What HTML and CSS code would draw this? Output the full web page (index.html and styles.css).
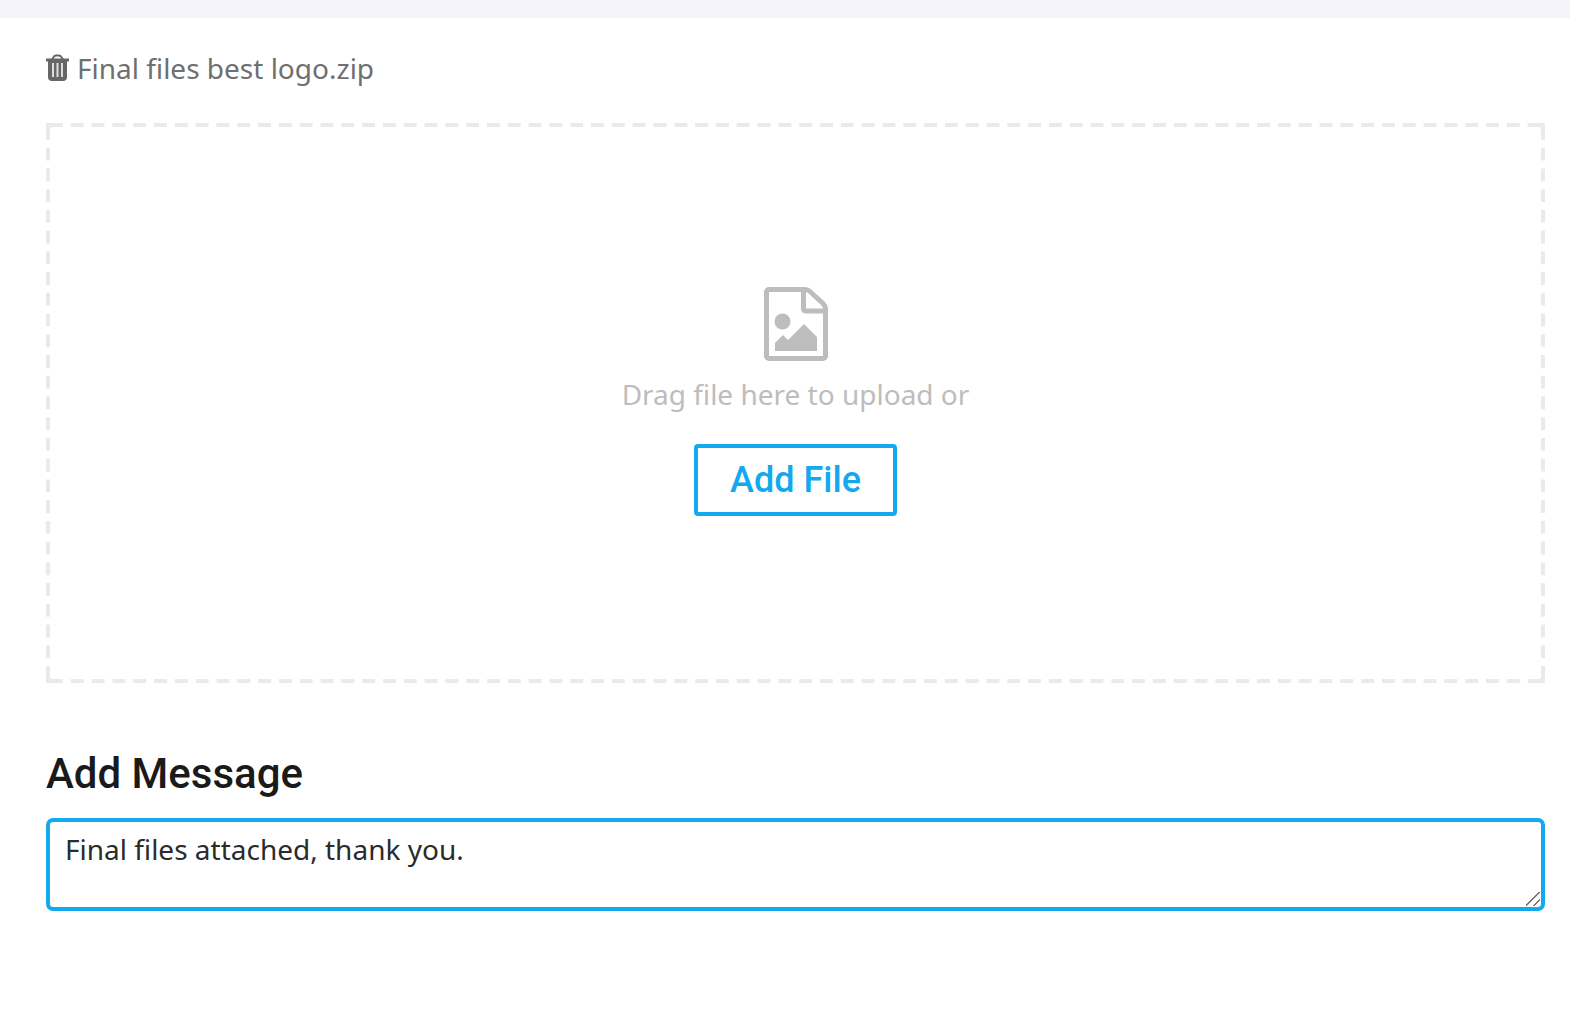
FILE: index.html
```html
<!DOCTYPE html>
<html lang="en">
<head>
  <meta charset="UTF-8">
  <meta name="viewport" content="width=device-width, initial-scale=1">
  <title>Upload files</title>
  <link rel="stylesheet" href="styles.css">
</head>
<body>

<div class="top-bar"></div>

<form class="upload-form">
  <div class="file-row">
    <button type="button" class="delete-btn" aria-label="Remove file">
      <svg class="trash-icon" viewBox="0 0 24 28" aria-hidden="true">
        <path d="M6 5.500L8 2.500Q8.500 1.500 10 1.500h3q1.500 0 2 1l2 3" fill="none" stroke="currentColor" stroke-width="2"/>
        <path d="M0 4.500h23v3h-2V23a4 4 0 0 1-4 4H6a4 4 0 0 1-4-4V7.500H0z" fill="currentColor"/>
        <path d="M7 9v14M11.500 9v14M16 9v14" stroke="#ddd" stroke-width="2"/>
      </svg>
    </button>
    <span class="file-name">Final files best logo.zip</span>
  </div>

  <div class="drop-zone">
    <svg class="file-icon" viewBox="0 0 64 74" aria-hidden="true">
      <path d="M5 2.500h36q3 0 5 2l13 12q2.500 2.500 2.500 5V69a2.500 2.500 0 0 1-2.500 2.500H5A2.500 2.500 0 0 1 2.500 69V5A2.500 2.500 0 0 1 5 2.500z" fill="none" stroke="currentColor" stroke-width="5"/>
      <path d="M39.500 3v19a2 2 0 0 0 2 2H61" fill="none" stroke="currentColor" stroke-width="5"/>
      <circle cx="18.500" cy="34.500" r="8" fill="currentColor"/>
      <path d="M11 64v-8l8-8 5 5 16-16 13 13v14z" fill="currentColor"/>
    </svg>
    <p class="drop-text">Drag file here to upload or</p>
    <button type="button" class="add-btn">Add File</button>
  </div>

  <label for="message" class="message-label">Add Message</label>
  <textarea id="message" class="message-box" rows="2">Final files attached, thank you.</textarea>
</form>

</body>
</html>
```
FILE: styles.css
```css
* {
  box-sizing: border-box;
}

body {
  margin: 0;
  background: #fff;
  font-family: "Noto Sans", "Open Sans", sans-serif;
  font-size: 28px;
  line-height: 36px;
  color: #2b2b2b;
}

.top-bar {
  height: 18px;
  background: #f5f4fa;
}

.upload-form {
  padding: 32px 25px 40px 46px;
}

.file-row {
  display: flex;
  align-items: center;
  gap: 7px;
  margin-bottom: 37px;
  color: #6f6f6f;
}

.delete-btn {
  display: flex;
  padding: 0;
  border: none;
  background: none;
  color: #666;
  cursor: pointer;
}

.trash-icon {
  width: 24px;
  height: 28px;
}

/* long dashes, drawn as tiles along the four edges, then the corners */
.drop-zone {
  --dash: #eaeaea;
  --row: linear-gradient(90deg, transparent 20%, var(--dash) 20% 80%, transparent 80%);
  --column: linear-gradient(transparent 20%, var(--dash) 20% 80%, transparent 80%);
  --corner: linear-gradient(var(--dash), var(--dash));
  display: flex;
  flex-direction: column;
  align-items: center;
  justify-content: center;
  min-height: 560px;
  margin-bottom: 67px;
  padding-bottom: 4px;
  color: #bdbdbd;
  background:
    var(--row) left top / calc(100% / 72) 4px repeat-x,
    var(--row) left bottom / calc(100% / 72) 4px repeat-x,
    var(--column) left top / 4px 21px no-repeat round,
    var(--column) right top / 4px 21px no-repeat round,
    var(--corner) left top / 5px 5px no-repeat,
    var(--corner) right top / 5px 5px no-repeat,
    var(--corner) left bottom / 5px 5px no-repeat,
    var(--corner) right bottom / 5px 5px no-repeat;
}

.file-icon {
  width: 64px;
  height: 74px;
}

.drop-text {
  margin: 15px 0 32px;
}

.add-btn {
  padding: 14px 32px;
  border: 4px solid #14a9ee;
  border-radius: 4px;
  background: #fff;
  color: #14a9ee;
  font-family: Roboto, sans-serif;
  font-size: 36px;
  font-weight: 500;
  line-height: 36px;
  cursor: pointer;
}

.message-label {
  display: block;
  margin-bottom: 20px;
  color: #1a1a1a;
  font-family: Roboto, sans-serif;
  font-size: 42px;
  font-weight: 500;
  line-height: 48px;
}

.message-box {
  display: block;
  width: 100%;
  height: 93px;
  padding: 9px 15px;
  border: 4px solid #14a9ee;
  border-radius: 7px;
  outline: none;
  background: #fff;
  color: #2b2b2b;
  font: inherit;
  resize: vertical;
}

.message-box::-webkit-scrollbar {
  width: 18px;
  height: 18px;
}

.message-box::-webkit-resizer {
  background: linear-gradient(135deg, transparent 44%, #777 46% 52%, transparent 54% 72%, #777 74% 80%, transparent 82%) 0 0 / 14px 14px no-repeat;
}
```
